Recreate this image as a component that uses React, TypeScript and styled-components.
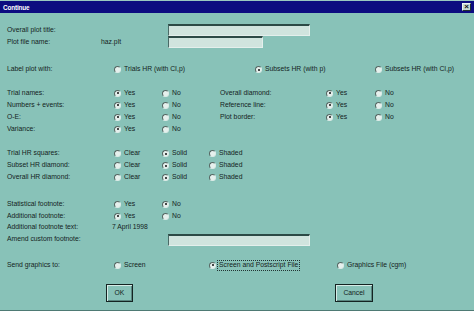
import { ReactNode } from 'react'
import styled, { createGlobalStyle } from 'styled-components'

const GlobalStyle = createGlobalStyle`
  html, body {
    margin: 0;
    padding: 0;
    background: #88c2b8;
  }
  body {
    font-family: "Liberation Sans", Arial, sans-serif;
  }
`

type RadioProps = {
  label: ReactNode
  checked?: boolean
  focus?: boolean
}

function Radio(props: RadioProps) {
  const { label, checked, focus } = props
  return (
    <RadioRoot>
      <Dot $on={checked} />
      <RadioLabel $focus={focus}>{label}</RadioLabel>
    </RadioRoot>
  )
}

const YES_NO_COLS = '107px 48px 58px 106px 49px auto'
const SHADE_COLS = '107px 48px 47px auto'

export default function App() {
  return (
    <Window>
      <GlobalStyle />
      <TitleBar>
        <Title>Continue</Title>
        <CloseBox>×</CloseBox>
      </TitleBar>

      <Body>
        <Section $gap={11}>
          <Row $cols="94px 67px auto">
            <Label>Overall plot title:</Label>
            <span />
            <Field $w={142} />
          </Row>
          <Row $cols="94px 67px auto">
            <Label>Plot file name:</Label>
            <Label>haz.plt</Label>
            <Field $w={95} />
          </Row>
        </Section>

        <Section $gap={15.5}>
          <Row $cols="107px 141px 120px auto">
            <Label>Label plot with:</Label>
            <Radio label="Trials HR (with CI,p)" />
            <Radio label="Subsets HR (with p)" checked />
            <Radio label="Subsets HR (with CI,p)" />
          </Row>
        </Section>

        <Section $gap={11.5}>
          <Row $cols={YES_NO_COLS}>
            <Label>Trial names:</Label>
            <Radio label="Yes" checked />
            <Radio label="No" />
            <Label>Overall diamond:</Label>
            <Radio label="Yes" checked />
            <Radio label="No" />
          </Row>
          <Row $cols={YES_NO_COLS}>
            <Label>Numbers + events:</Label>
            <Radio label="Yes" checked />
            <Radio label="No" />
            <Label>Reference line:</Label>
            <Radio label="Yes" checked />
            <Radio label="No" />
          </Row>
          <Row $cols={YES_NO_COLS}>
            <Label>O-E:</Label>
            <Radio label="Yes" checked />
            <Radio label="No" />
            <Label>Plot border:</Label>
            <Radio label="Yes" checked />
            <Radio label="No" />
          </Row>
          <Row $cols={YES_NO_COLS}>
            <Label>Variance:</Label>
            <Radio label="Yes" checked />
            <Radio label="No" />
          </Row>
        </Section>

        <Section $gap={12.5}>
          {['Trial HR squares:', 'Subset HR diamond:', 'Overall HR diamond:'].map(name => (
            <Row key={name} $cols={SHADE_COLS}>
              <Label>{name}</Label>
              <Radio label="Clear" />
              <Radio label="Solid" checked />
              <Radio label="Shaded" />
            </Row>
          ))}
        </Section>

        <Section $gap={15}>
          <Row $cols={SHADE_COLS} $h={11.7}>
            <Label>Statistical footnote:</Label>
            <Radio label="Yes" />
            <Radio label="No" checked />
          </Row>
          <Row $cols={SHADE_COLS} $h={11.7}>
            <Label>Additional footnote:</Label>
            <Radio label="Yes" checked />
            <Radio label="No" />
          </Row>
          <Row $cols="105px 56px auto" $h={11.7}>
            <Label>Additional footnote text:</Label>
            <Label>7 April 1998</Label>
          </Row>
          <Row $cols="105px 56px auto" $h={11.7}>
            <Label>Amend custom footnote:</Label>
            <span />
            <Field $w={142} />
          </Row>
        </Section>

        <Section $gap={14}>
          <Row $cols="107px 95px 128px auto">
            <Label>Send graphics to:</Label>
            <Radio label="Screen" />
            <Radio label="Screen and Postscript File" checked focus />
            <Radio label="Graphics File (cgm)" />
          </Row>
        </Section>

        <Section $gap={12.5}>
          <Row $cols="99px 229px auto" $h={18}>
            <span />
            <Button $w={27}>OK</Button>
            <Button $w={38}>Cancel</Button>
          </Row>
        </Section>
      </Body>
    </Window>
  )
}

const Window = styled.div`
  width: 474px;
  height: 311px;
  box-sizing: border-box;
  display: flex;
  flex-direction: column;
  overflow: hidden;
  background: #88c2b8;
  color: #142222;
  font-size: 6.8px;
  border-bottom: 1px solid #4e7a74;
`

const TitleBar = styled.div`
  height: 13px;
  display: flex;
  align-items: center;
  justify-content: space-between;
  padding: 0 3px;
  background: #0c0c80;
  border-top: 1px solid #9ac8c0;
  box-sizing: border-box;
`

const Title = styled.span`
  color: #fff;
  font-weight: bold;
  font-size: 6.4px;
  letter-spacing: -0.15px;
`

const CloseBox = styled.div`
  width: 9px;
  height: 8px;
  box-sizing: border-box;
  display: flex;
  align-items: center;
  justify-content: center;
  background: #c4d8d2;
  border: 1px solid;
  border-color: #eef6f3 #203030 #203030 #eef6f3;
  color: #111;
  font-size: 8px;
  font-weight: bold;
  line-height: 1;
`

const Body = styled.div`
  display: flex;
  flex-direction: column;
  padding-left: 7px;
`

const Section = styled.div<{ $gap: number }>`
  display: flex;
  flex-direction: column;
  margin-top: ${p => p.$gap}px;
`

const Row = styled.div<{ $cols: string; $h?: number }>`
  display: grid;
  grid-template-columns: ${p => p.$cols};
  align-items: center;
  height: ${p => p.$h ?? 12}px;
  white-space: nowrap;
`

const Label = styled.span`
  line-height: 1;
`

const RadioRoot = styled.span`
  display: flex;
  align-items: center;
  gap: 3px;
`

const Dot = styled.span<{ $on?: boolean }>`
  width: 7px;
  height: 7px;
  box-sizing: border-box;
  flex-shrink: 0;
  display: flex;
  align-items: center;
  justify-content: center;
  border-radius: 50%;
  border: 1px solid;
  border-color: #556662 #dcebe7 #dcebe7 #556662;
  background: #e6f0ed;

  &::after {
    content: '';
    width: 2px;
    height: 2px;
    border-radius: 50%;
    background: ${p => (p.$on ? '#111' : 'transparent')};
  }
`

const RadioLabel = styled.span<{ $focus?: boolean }>`
  line-height: 1;
  padding: ${p => (p.$focus ? '1px 1px' : '0')};
  margin-left: ${p => (p.$focus ? '-1px' : '0')};
  outline: ${p => (p.$focus ? '1px dotted #233' : 'none')};
`

const Field = styled.div<{ $w: number }>`
  width: ${p => p.$w}px;
  height: 12px;
  box-sizing: border-box;
  background: #d0e4de;
  border-top: 2px solid #2c4a46;
  border-left: 1px solid #4a6a66;
  border-right: 1px solid #e4efec;
  border-bottom: 1px solid #e4efec;
`

const Button = styled.button<{ $w: number }>`
  width: ${p => p.$w}px;
  height: 18px;
  padding: 0;
  background: #88c2b8;
  border: 1px solid #142422;
  box-shadow: inset 1px 1px 0 #d6ebe6, inset -1px -1px 0 #5a8680;
  color: #142222;
  font-family: "Liberation Sans", Arial, sans-serif;
  font-size: 6.8px;
  justify-self: start;
`
